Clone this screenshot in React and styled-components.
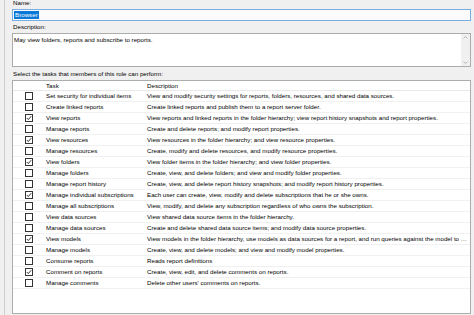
import React from 'react';
import styled, { createGlobalStyle } from 'styled-components';

const GlobalStyle = createGlobalStyle`
	html, body {
		margin: 0;
		padding: 0;
		background: #f0f0f0;
	}
	body {
		font-family: "Liberation Sans", Arial, sans-serif;
	}
`;

const tasks = [
	['Set security for individual items', 'View and modify security settings for reports, folders, resources, and shared data sources.', false],
	['Create linked reports', 'Create linked reports and publish them to a report server folder.', false],
	['View reports', 'View reports and linked reports in the folder hierarchy; view report history snapshots and report properties.', true],
	['Manage reports', 'Create and delete reports; and modify report properties.', false],
	['View resources', 'View resources in the folder hierarchy; and view resource properties.', true],
	['Manage resources', 'Create, modify and delete resources, and modify resource properties.', false],
	['View folders', 'View folder items in the folder hierarchy; and view folder properties.', true],
	['Manage folders', 'Create, view, and delete folders; and view and modify folder properties.', false],
	['Manage report history', 'Create, view, and delete report history snapshots; and modify report history properties.', false],
	['Manage individual subscriptions', 'Each user can create, view, modify and delete subscriptions that he or she owns.', true],
	['Manage all subscriptions', 'View, modify, and delete any subscription regardless of who owns the subscription.', false],
	['View data sources', 'View shared data source items in the folder hierarchy.', false],
	['Manage data sources', 'Create and delete shared data source items; and modify data source properties.', false],
	['View models', 'View models in the folder hierarchy, use models as data sources for a report, and run queries against the model to retrieve data.', true],
	['Manage models', 'Create, view, and delete models; and view and modify model properties.', false],
	['Consume reports', 'Reads report definitions', false],
	['Comment on reports', 'Create, view, edit, and delete comments on reports.', true],
	['Manage comments', "Delete other users' comments on reports.", false],
];

const Window = styled.div`
	width: 474px;
	height: 315px;
	overflow: hidden;
	box-sizing: border-box;
	padding-left: 4px;
	background: #f0f0f0;
`;

const Panel = styled.div`
	height: 100%;
	box-sizing: border-box;
	border-left: 1px solid #cfcfcf;
	padding: 0 3px 1px 7px;
	display: flex;
	flex-direction: column;
`;

const Label = styled.div`
	font-size: 6.2px;
	line-height: 8px;
	color: #000;
	padding-left: 1px;
	margin-top: ${p => p.$top}px;
	white-space: nowrap;
`;

const NameInput = styled.div`
	margin-top: 2px;
	height: 12px;
	box-sizing: border-box;
	border: 1px solid #7aaee0;
	background: #fbfbfb;
	display: flex;
	align-items: center;
	padding-left: 1px;
`;

const Selected = styled.span`
	background: #0a78d7;
	color: #fff;
	font-size: 6.2px;
	line-height: 8px;
	padding: 0 1px;
`;

const TextBox = styled.div`
	margin-top: 2px;
	height: 34px;
	box-sizing: border-box;
	border: 1px solid #acacac;
	background: #fff;
	display: flex;
`;

const TextBody = styled.div`
	flex: 1;
	font-size: 6.2px;
	line-height: 8px;
	padding: 2px 1px;
	color: #000;
`;

const ScrollBar = styled.div`
	width: 9px;
	background: #f0f0f0;
	display: flex;
	flex-direction: column;
	justify-content: space-between;
	align-items: center;
	padding: 2px 0;
`;

const Table = styled.div`
	margin-top: 2px;
	flex: 1;
	min-height: 0;
	box-sizing: border-box;
	border: 1px solid #adadad;
	background: #fff;
	overflow: hidden;
`;

const Row = styled.div`
	display: grid;
	grid-template-columns: 30px 101px minmax(0, 1fr);
	height: ${p => (p.$head ? 10 : 11)}px;
	line-height: ${p => (p.$head ? 9 : 10)}px;
	box-sizing: border-box;
	border-bottom: 1px solid ${p => (p.$head ? '#e8e8e8' : '#f0f0f0')};
	font-size: 6.2px;
	color: #000;
`;

const Cell = styled.div`
	padding: 0 3px;
	white-space: nowrap;
	overflow: hidden;
	text-overflow: ellipsis;
	min-width: 0;
`;

const CheckCell = styled.div`
	display: flex;
	align-items: center;
	justify-content: center;
`;

const Box = styled.div`
	width: 8px;
	height: 8px;
	box-sizing: border-box;
	border: 1px solid #333;
	background: #fff;
	display: flex;
	align-items: center;
	justify-content: center;
	margin-left: 1px;
`;

function Check({ on }) {
	return (
		<Box>
			{on && (
				<svg width="6" height="6" viewBox="0 0 6 6">
					<polyline points="0.8,3 2.3,4.6 5.2,1.2" fill="none" stroke="#222" strokeWidth="0.9" />
				</svg>
			)}
		</Box>
	);
}

function Arrow({ up }) {
	return (
		<svg width="5" height="3" viewBox="0 0 5 3">
			<polyline points={up ? '0.5,2.5 2.5,0.5 4.5,2.5' : '0.5,0.5 2.5,2.5 4.5,0.5'} fill="none" stroke="#a6a6a6" strokeWidth="0.8" />
		</svg>
	);
}

export default function App() {
	return (
		<Window>
			<GlobalStyle />
			<Panel>
				<Label $top={-1}>Name:</Label>
				<NameInput>
					<Selected>Browser</Selected>
				</NameInput>
				<Label $top={2}>Description:</Label>
				<TextBox>
					<TextBody>May view folders, reports and subscribe to reports.</TextBody>
					<ScrollBar>
						<Arrow up />
						<Arrow />
					</ScrollBar>
				</TextBox>
				<Label $top={3}>Select the tasks that members of this role can perform:</Label>
				<Table>
					<Row $head>
						<CheckCell />
						<Cell>Task</Cell>
						<Cell>Description</Cell>
					</Row>
					{tasks.map(([name, desc, on]) => (
						<Row key={name}>
							<CheckCell>
								<Check on={on} />
							</CheckCell>
							<Cell>{name}</Cell>
							<Cell>{desc}</Cell>
						</Row>
					))}
				</Table>
			</Panel>
		</Window>
	);
}
